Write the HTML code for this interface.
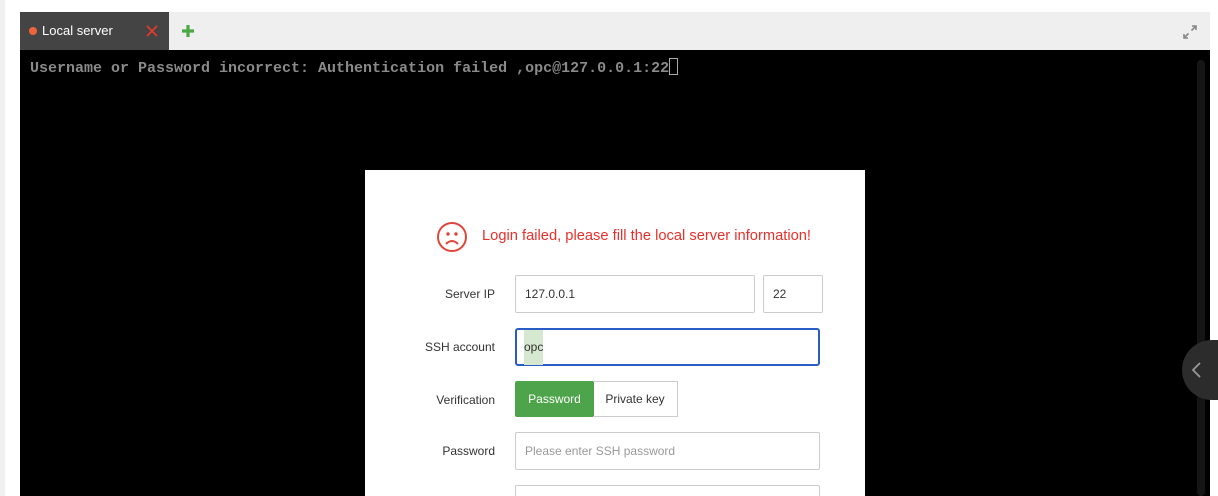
<!DOCTYPE html>
<html style="overflow:hidden;width:1218px;height:496px"><head><style>
*{margin:0;padding:0;box-sizing:border-box}
body{width:1218px;height:496px;background:#fff;position:relative;overflow:hidden;font-family:"Liberation Sans",Arial,sans-serif}
.strip{position:absolute;left:0;top:0;width:5px;height:496px;background:#f0f0f0}
.bar{position:absolute;left:20px;top:12px;width:1190px;height:38px;background:#efefef}
.tab{position:absolute;left:20px;top:12px;width:149px;height:38px;background:#444;color:#fff;font-size:13px}
.dot{position:absolute;left:9px;top:15px;width:8px;height:8px;border-radius:50%;background:#f0643c}
.term{position:absolute;left:20px;top:50px;width:1190px;height:446px;background:#000}
.txt{position:absolute;left:30px;top:58px;font-family:"Liberation Mono",monospace;font-size:15px;font-weight:bold;color:#8a8a8a;white-space:pre}
.cur{display:inline-block;width:9px;height:17px;border:1px solid #aaa;vertical-align:-3px}
.sb{position:absolute;left:1197px;top:60px;width:8px;height:436px;background:#151515;border-radius:4px}
.side{position:absolute;left:1182px;top:340px;width:36px;height:60px;border-radius:30px 0 0 30px;background:#2c2c2c}
.modal{position:absolute;left:365px;top:170px;width:500px;height:326px;background:#fff;overflow:hidden}
.lbl{position:absolute;right:370px;font-size:12px;color:#333;text-align:right}
.inp{position:absolute;border:1px solid #ccc;border-radius:2px;font-size:12px;color:#333;padding-left:9px;display:flex;align-items:center}
</style></head><body>
<div class="strip"></div>
<div class="bar"></div>
<div class="tab"><div class="dot"></div><span style="position:absolute;left:22px;top:11px">Local server</span>
<svg style="position:absolute;left:126px;top:13px" width="12" height="12"><path d="M1 1L11 11M11 1L1 11" stroke="#e03a2c" stroke-width="1.8"/></svg></div>
<svg style="position:absolute;left:181px;top:24px" width="14" height="14"><path d="M7 1V13M1 7H13" stroke="#4aa944" stroke-width="3.2"/></svg>
<svg style="position:absolute;left:1182px;top:24px" width="16" height="16"><path d="M10 2H14V6M14 2L9.5 6.5M6 14H2V10M2 14L6.5 9.5" stroke="#888" stroke-width="1.6" fill="none"/></svg>
<div class="term"></div>
<div class="txt">Username or Password incorrect: Authentication failed ,opc@127.0.0.1:22<span class="cur"></span></div>
<div class="sb"></div>
<div class="side"><svg style="position:absolute;left:8px;top:21px" width="12" height="18"><path d="M10 2L3 9L10 16" stroke="#999" stroke-width="1.8" fill="none"/></svg></div>
<div class="modal">
<svg style="position:absolute;left:71px;top:51px" width="32" height="32"><circle cx="16" cy="16" r="14" fill="none" stroke="#e0453b" stroke-width="2"/><circle cx="12" cy="13" r="1.7" fill="#e0453b"/><circle cx="20" cy="13" r="1.7" fill="#e0453b"/><path d="M10 23Q16 17 22 23" stroke="#e0453b" stroke-width="2" fill="none"/></svg>
<div style="position:absolute;left:117px;top:58px;font-size:14.7px;color:#e8302a">Login failed, please fill the local server information!</div>
<div class="lbl" style="top:117px">Server IP</div>
<div class="inp" style="left:150px;top:105px;width:240px;height:38px">127.0.0.1</div>
<div class="inp" style="left:398px;top:105px;width:60px;height:38px">22</div>
<div class="lbl" style="top:170px">SSH account</div>
<div class="inp" style="left:150px;top:158px;width:305px;height:38px;border:2px solid #2a5cc6;border-radius:3px;padding-left:7px"><span style="background:#d6e8cf;padding:10px 0;line-height:15px">opc</span></div>
<div class="lbl" style="top:223px">Verification</div>
<div style="position:absolute;left:150px;top:211px;width:79px;height:36px;background:#4ea44b;border-radius:2px 0 0 2px;color:#fff;font-size:12px;display:flex;align-items:center;justify-content:center">Password</div>
<div style="position:absolute;left:228px;top:211px;width:85px;height:36px;border:1px solid #ccc;border-left:none;color:#333;font-size:12px;display:flex;align-items:center;justify-content:center">Private key</div>
<div class="lbl" style="top:274px">Password</div>
<div class="inp" style="left:150px;top:262px;width:305px;height:38px;color:#999">Please enter SSH password</div>
<div style="position:absolute;left:150px;top:315px;width:305px;height:11px;border:1px solid #ccc;border-bottom:none;border-radius:2px 2px 0 0"></div>
</div>
</body></html>
